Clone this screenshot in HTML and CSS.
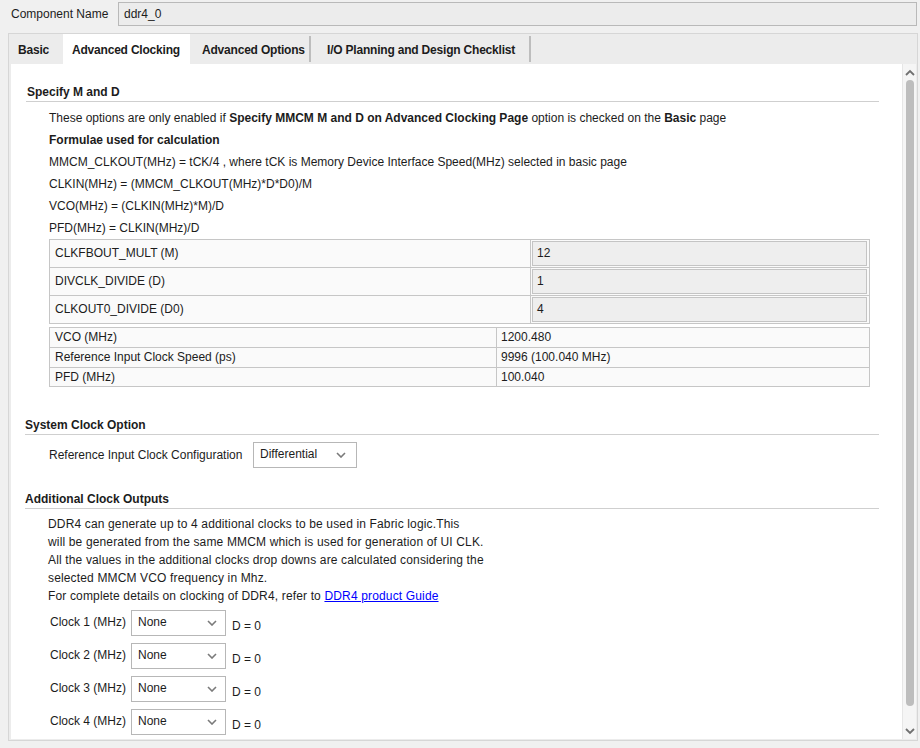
FILE: index.html
```html
<!DOCTYPE html>
<html>
<head>
<meta charset="utf-8">
<link rel="stylesheet" href="styles.css">
</head>
<body>
<div class="top">
  <span class="top-label">Component Name</span>
  <div class="top-input">ddr4_0</div>
</div>
<div class="panel">
  <div class="tabs">
    <div class="tab t1">Basic</div>
    <div class="tab t2 active">Advanced Clocking</div>
    <div class="tab t3">Advanced Options</div>
    <div class="sep"></div>
    <div class="tab t4">I/O Planning and Design Checklist</div>
    <div class="sep"></div>
  </div>
  <div class="body">
    <div class="content">
      <div class="title first">Specify M and D</div>
      <div class="para22">
        <div>These options are only enabled if <b>Specify MMCM M and D on Advanced Clocking Page</b> option is checked on the <b>Basic</b> page</div>
        <div><b>Formulae used for calculation</b></div>
        <div>MMCM_CLKOUT(MHz) = tCK/4 , where tCK is Memory Device Interface Speed(MHz) selected in basic page</div>
        <div>CLKIN(MHz) = (MMCM_CLKOUT(MHz)*D*D0)/M</div>
        <div>VCO(MHz) = (CLKIN(MHz)*M)/D</div>
        <div>PFD(MHz) = CLKIN(MHz)/D</div>
      </div>
      <div class="tbl1">
        <div class="r1"><div class="c1">CLKFBOUT_MULT (M)</div><div class="c2"><div class="val">12</div></div></div>
        <div class="r1"><div class="c1">DIVCLK_DIVIDE (D)</div><div class="c2"><div class="val">1</div></div></div>
        <div class="r1"><div class="c1">CLKOUT0_DIVIDE (D0)</div><div class="c2"><div class="val">4</div></div></div>
      </div>
      <div class="tbl2">
        <div class="r2"><div class="d1">VCO (MHz)</div><div class="d2">1200.480</div></div>
        <div class="r2"><div class="d1">Reference Input Clock Speed (ps)</div><div class="d2">9996 (100.040 MHz)</div></div>
        <div class="r2 last"><div class="d1">PFD (MHz)</div><div class="d2">100.040</div></div>
      </div>
      <div class="title sys">System Clock Option</div>
      <div class="refrow">
        <span class="reflabel">Reference Input Clock Configuration</span>
        <div class="dd dd-diff"><span>Differential</span><svg class="chev" width="10" height="6" viewBox="0 0 10 6"><path d="M1 1 L5 5 L9 1" fill="none" stroke="#7a7a7a" stroke-width="1.6"/></svg></div>
      </div>
      <div class="title add">Additional Clock Outputs</div>
      <div class="para18">
        <div>DDR4 can generate up to 4 additional clocks to be used in Fabric logic.This</div>
        <div>will be generated from the same MMCM which is used for generation of UI CLK.</div>
        <div>All the values in the additional clocks drop downs are calculated considering the</div>
        <div>selected MMCM VCO frequency in Mhz.</div>
        <div>For complete details on clocking of DDR4, refer to <a class="link">DDR4 product Guide</a></div>
      </div>
      <div class="clocks">
        <div class="crow"><span class="clabel">Clock 1 (MHz)</span><div class="dd dd-clk"><span>None</span><svg class="chev" width="10" height="6" viewBox="0 0 10 6"><path d="M1 1 L5 5 L9 1" fill="none" stroke="#7a7a7a" stroke-width="1.6"/></svg></div><span class="dval">D = 0</span></div>
        <div class="crow"><span class="clabel">Clock 2 (MHz)</span><div class="dd dd-clk"><span>None</span><svg class="chev" width="10" height="6" viewBox="0 0 10 6"><path d="M1 1 L5 5 L9 1" fill="none" stroke="#7a7a7a" stroke-width="1.6"/></svg></div><span class="dval">D = 0</span></div>
        <div class="crow"><span class="clabel">Clock 3 (MHz)</span><div class="dd dd-clk"><span>None</span><svg class="chev" width="10" height="6" viewBox="0 0 10 6"><path d="M1 1 L5 5 L9 1" fill="none" stroke="#7a7a7a" stroke-width="1.6"/></svg></div><span class="dval">D = 0</span></div>
        <div class="crow"><span class="clabel">Clock 4 (MHz)</span><div class="dd dd-clk"><span>None</span><svg class="chev" width="10" height="6" viewBox="0 0 10 6"><path d="M1 1 L5 5 L9 1" fill="none" stroke="#7a7a7a" stroke-width="1.6"/></svg></div><span class="dval">D = 0</span></div>
      </div>
    </div>
    <div class="scrollbar">
      <svg class="arrow" width="10" height="7" viewBox="0 0 10 7"><path d="M1 6 L5 2 L9 6" fill="none" stroke="#707070" stroke-width="1.8"/></svg>
      <div class="thumb"></div>
      <svg class="arrow" width="10" height="7" viewBox="0 0 10 7"><path d="M1 1 L5 5 L9 1" fill="none" stroke="#707070" stroke-width="1.8"/></svg>
    </div>
  </div>
</div>
</body>
</html>
```
FILE: styles.css
```css
html, body {
  margin: 0;
  padding: 0;
}
body {
  width: 920px;
  height: 748px;
  overflow: hidden;
  background: #f0f0f0;
  font-family: "Liberation Sans", Arial, sans-serif;
  font-size: 12px;
  color: #1c1c1c;
}
.top {
  display: flex;
  align-items: center;
  height: 24px;
  padding: 2px 3px 0 11px;
}
.top-label {
  width: 107px;
}
.top-input {
  flex: 1;
  line-height: 22px;
  box-sizing: border-box;
  height: 24px;
  border: 1px solid #b9b9b9;
  background: #ececec;
  padding-left: 5px;
}
.panel {
  margin: 7px 2px 0 8px;
  border: 1px solid #d6d6d6;
  background: #ececec;
  padding: 0 1px 1px 2px;
  height: 708px;
  box-sizing: border-box;
  display: flex;
  flex-direction: column;
}
.tabs {
  display: flex;
  align-items: center;
  height: 30px;
  flex: none;
}
.tab {
  height: 30px;
  line-height: 30px;
  padding-top: 1px;
  font-weight: bold;
  box-sizing: border-box;
  color: #1c1c1c;
  letter-spacing: -0.2px;
  white-space: nowrap;
}
.t1 { width: 52px; padding-left: 7px; }
.t2 { width: 127px; padding-left: 9px; }
.t3 { width: 119px; padding-left: 12px; }
.t4 { width: 218px; padding-left: 16px; }
.tab.active { background: #ffffff; }
.sep {
  width: 2px;
  height: 26px;
  background: #bdbdbd;
}
.body {
  flex: 1;
  display: flex;
  background: #ffffff;
  min-height: 0;
}
.content {
  flex: 1;
  padding: 0 23px 0 15px;
  overflow: hidden;
}
.title {
  font-weight: bold;
  line-height: 16px;
  border-bottom: 1px solid #cfcfcf;
  padding: 0 0 1px 1px;
}
.title.first { margin-top: 20px; }
.title.sys { margin-top: 30px; padding-left: 0; margin-left: -1px; }
.title.add { margin-top: 23px; padding-left: 0; margin-left: -1px; }
.para22 {
  margin-top: 5px;
  padding-left: 23px;
  line-height: 22px;
}
.tbl1 {
  margin: 0 9px 0 23px;
  border: 1px solid #c6c6c6;
  background: #fafafa;
}
.r1 {
  display: flex;
  height: 27px;
}
.r1 + .r1 { border-top: 1px solid #c6c6c6; }
.c1 {
  width: 475px;
  padding-left: 5px;
  line-height: 27px;
  border-right: 1px solid #c6c6c6;
}
.c2 {
  flex: 1;
  padding: 1px 2px 1px 1px;
  display: flex;
}
.val {
  flex: 1;
  background: #eeeeee;
  border: 1px solid #c4c4c4;
  line-height: 23px;
  padding-left: 4px;
}
.tbl2 {
  margin: 3px 9px 0 23px;
  border: 1px solid #c6c6c6;
  background: #fafafa;
}
.r2 {
  display: flex;
  height: 19px;
  line-height: 19px;
}
.r2.last { height: 18px; line-height: 18px; }
.r2 + .r2 { border-top: 1px solid #c6c6c6; }
.d1 {
  width: 441px;
  padding-left: 5px;
  border-right: 1px solid #c6c6c6;
}
.d2 {
  flex: 1;
  padding-left: 4px;
}
.refrow {
  display: flex;
  align-items: center;
  margin-top: 7px;
  padding-left: 23px;
}
.reflabel { width: 204px; margin-top: -1px; }
.dd {
  display: flex;
  align-items: center;
  justify-content: space-between;
  box-sizing: border-box;
  height: 26px;
  border: 1px solid #b7b7b7;
  background: #ffffff;
  padding: 0 10px 0 6px;
}
.dd-diff { width: 104px; }
.dd-clk { width: 95px; padding-left: 6px; padding-right: 8px; }
.dd span { line-height: 22px; margin-top: -3px; }
.para18 {
  margin-top: 6px;
  padding-left: 22px;
  line-height: 18px;
  letter-spacing: 0.15px;
}
.link {
  color: #0000ff;
  text-decoration: underline;
}
.clocks {
  margin-top: 5px;
  padding-left: 24px;
  display: flex;
  flex-direction: column;
  gap: 7px;
}
.crow {
  display: flex;
  align-items: center;
}
.clabel { width: 81px; margin-top: -2px; }
.dval { margin-left: 6px; margin-top: 6px; }
.scrollbar {
  width: 14px;
  flex: none;
  background: #f5f5f5;
  border-left: 1px solid #e6e6e6;
  display: flex;
  flex-direction: column;
  align-items: center;
  padding: 5px 0 4px;
  box-sizing: border-box;
}
.arrow { flex: none; }
.thumb {
  width: 8px;
  flex: 1;
  margin: 4px 0 22px;
  background: #bdbdbd;
  border-radius: 4px;
}
```
